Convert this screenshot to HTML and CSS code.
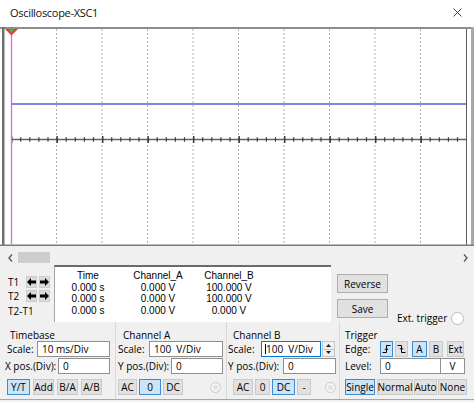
FILE: index.html
```html
<!DOCTYPE html>
<html lang="en">
<head>
  <meta charset="UTF-8">
  <title>Oscilloscope-XSC1</title>
  <link rel="stylesheet" href="styles.css">
</head>
<body>
  <div class="window">
    <div class="titlebar">
      <span class="title">Oscilloscope-XSC1</span>
      <svg class="close" width="9" height="9" viewBox="0 0 9 9"><path d="M0.5 0.5L8.5 8.5M8.5 0.5L0.5 8.5" stroke="#444" stroke-width="1"/></svg>
    </div>

    <!-- scope screen, 10 divisions across -->
    <svg class="screen" width="474" height="219" viewBox="0 0 474 219">
      <rect width="474" height="219" fill="#fff"/>
      <rect x="0" y="0" width="471" height="2" fill="#8e8e8e"/>
      <rect x="471" y="0" width="3" height="218" fill="#a8a8a8"/>
      <rect x="2" y="0" width="2.5" height="218" fill="#717171"/>
      <line x1="466.5" y1="2" x2="466.5" y2="218" stroke="#5c5c5c"/>
      <g stroke="#b3b3b3" stroke-dasharray="2 2">
        <line x1="56.5" y1="2" x2="56.5" y2="218"/>
        <line x1="102" y1="2" x2="102" y2="218"/>
        <line x1="147.5" y1="2" x2="147.5" y2="218"/>
        <line x1="193" y1="2" x2="193" y2="218"/>
        <line x1="238.5" y1="2" x2="238.5" y2="218"/>
        <line x1="284" y1="2" x2="284" y2="218"/>
        <line x1="329.5" y1="2" x2="329.5" y2="218"/>
        <line x1="375" y1="2" x2="375" y2="218"/>
        <line x1="420.5" y1="2" x2="420.5" y2="218"/>
      </g>
      <line x1="11" y1="112.5" x2="466" y2="112.5" stroke="#626262" stroke-width="1.6"/>
      <line x1="11" y1="112.5" x2="466" y2="112.5" stroke="#3c3c3c" stroke-width="4.5" stroke-dasharray="1.2 7.9"/>
      <line x1="11" y1="112.5" x2="466" y2="112.5" stroke="#3c3c3c" stroke-width="7" stroke-dasharray="1.4 44.1"/>
      <line x1="11" y1="77" x2="466" y2="77" stroke="#5a5ad8" stroke-width="1.4"/>
      <line x1="11.5" y1="2" x2="11.5" y2="217" stroke="#e36be3" stroke-width="1.4"/>
      <polygon points="5,2 18,2 11.5,8.5" fill="#e03a2f"/>
      <polygon points="8.5,2.5 14.5,2.5 11.5,6" fill="#3fbf3f"/>
      <rect x="0" y="217.5" width="474" height="1.5" fill="#7a7a7a"/>
    </svg>

    <div class="hscroll">
      <svg width="5" height="8" viewBox="0 0 5 8"><path d="M4 0.5L1 4L4 7.5" fill="none" stroke="#555" stroke-width="1.3"/></svg>
      <div class="thumb"></div>
      <svg class="next" width="5" height="8" viewBox="0 0 5 8"><path d="M1 0.5L4 4L1 7.5" fill="none" stroke="#555" stroke-width="1.3"/></svg>
    </div>

    <div class="readout">
      <div class="cursors">
        <div class="cur-row">
          <span class="cur-label">T1</span>
          <span class="arrow-btn"><svg width="9" height="8" viewBox="0 0 9 8"><path d="M0 4L4 0V2.5H9V5.5H4V8Z"/></svg></span>
          <span class="arrow-btn"><svg width="9" height="8" viewBox="0 0 9 8"><path d="M9 4L5 0V2.5H0V5.5H5V8Z"/></svg></span>
        </div>
        <div class="cur-row">
          <span class="cur-label">T2</span>
          <span class="arrow-btn"><svg width="9" height="8" viewBox="0 0 9 8"><path d="M0 4L4 0V2.5H9V5.5H4V8Z"/></svg></span>
          <span class="arrow-btn"><svg width="9" height="8" viewBox="0 0 9 8"><path d="M9 4L5 0V2.5H0V5.5H5V8Z"/></svg></span>
        </div>
        <div class="cur-row diff">
          <span class="cur-label">T2-T1</span>
        </div>
      </div>

      <div class="values">
        <span>Time</span><span>Channel_A</span><span>Channel_B</span>
        <span>0.000 s</span><span>0.000 V</span><span>100.000 V</span>
        <span>0.000 s</span><span>0.000 V</span><span>100.000 V</span>
        <span>0.000 s</span><span>0.000 V</span><span>0.000 V</span>
      </div>

      <div class="actions">
        <div class="action-col">
          <button class="btn btn-wide">Reverse</button>
          <button class="btn btn-wide">Save</button>
        </div>
        <div class="ext">
          <span>Ext. trigger</span>
          <span class="radio"></span>
        </div>
      </div>
    </div>

    <div class="settings">
      <div class="group timebase">
        <div class="group-title">Timebase</div>
        <div class="row">
          <span>Scale:</span>
          <div class="field w73">10 ms/Div</div>
        </div>
        <div class="row">
          <span class="pull">X pos.(Div):</span>
          <div class="field w52">0</div>
        </div>
        <div class="row btn-row gap3">
          <button class="btn on w23">Y/T</button>
          <button class="btn w21">Add</button>
          <button class="btn w21">B/A</button>
          <button class="btn w21">A/B</button>
        </div>
      </div>

      <div class="group chan-a">
        <div class="group-title">Channel A</div>
        <div class="row">
          <span>Scale:</span>
          <div class="field w74">100&nbsp; V/Div</div>
        </div>
        <div class="row">
          <span>Y pos.(Div):</span>
          <div class="field w52">0</div>
        </div>
        <div class="row btn-row gap2">
          <button class="btn w19">AC</button>
          <button class="btn on w22">0</button>
          <button class="btn w20">DC</button>
          <span class="radio off"></span>
        </div>
      </div>

      <div class="group chan-b">
        <div class="group-title">Channel B</div>
        <div class="row">
          <span>Scale:</span>
          <div class="spin-field">
            <div class="field focus w60"><span class="caret"></span>100&nbsp; V/Div</div>
            <div class="spinner">
              <span><svg width="5" height="3" viewBox="0 0 5 3"><path d="M0 3L2.5 0L5 3Z"/></svg></span>
              <span><svg width="5" height="3" viewBox="0 0 5 3"><path d="M0 0L2.5 3L5 0Z"/></svg></span>
            </div>
          </div>
        </div>
        <div class="row">
          <span>Y pos.(Div):</span>
          <div class="field w53">0</div>
        </div>
        <div class="row btn-row gap2">
          <button class="btn w20">AC</button>
          <button class="btn w15">0</button>
          <button class="btn on w23">DC</button>
          <button class="btn w14">-</button>
          <span class="radio off"></span>
        </div>
      </div>

      <div class="group trigger">
        <div class="group-title">Trigger</div>
        <div class="row">
          <span class="trig-label">Edge:</span>
          <button class="btn on w13"><svg width="9" height="10" viewBox="0 0 9 10"><path d="M0.5 8.5H4.5V1.5H8.5M2.8 6L4.5 4.2L6.2 6" fill="none" stroke="#000" stroke-width="1"/></svg></button>
          <button class="btn w13 ml2"><svg width="9" height="10" viewBox="0 0 9 10"><path d="M0.5 1.5H4.5V8.5H8.5M2.8 4L4.5 5.8L6.2 4" fill="none" stroke="#000" stroke-width="1"/></svg></button>
          <button class="btn on w15 ml4">A</button>
          <button class="btn w14 ml2">B</button>
          <button class="btn w17 ml4">Ext</button>
        </div>
        <div class="row">
          <span class="trig-label">Level:</span>
          <div class="field w61">0</div>
          <div class="field unit">V</div>
        </div>
        <div class="row btn-row">
          <button class="btn on w30">Single</button>
          <button class="btn w36 ml2">Normal</button>
          <button class="btn w23 ml1">Auto</button>
          <button class="btn w29 ml1">None</button>
        </div>
      </div>
    </div>
  </div>
</body>
</html>
```

FILE: styles.css
```css
* {
  box-sizing: border-box;
}

body {
  margin: 0;
  background: #f0f0f0;
  font-family: "Open Sans", "Noto Sans", sans-serif;
  font-size: 10px;
  line-height: 12px;
  color: #000;
}

.window {
  width: 474px;
  height: 402px;
  overflow: hidden;
  background: #f0f0f0;
}

.titlebar {
  height: 27px;
  background: #fff;
  display: flex;
  align-items: center;
  padding: 0 12px 2px 10px;
}

.title {
  font-size: 11px;
  letter-spacing: -0.3px;
  color: #111;
}

.close {
  margin-left: auto;
}

.screen {
  display: block;
}

/* scrollbar under the screen */
.hscroll {
  height: 19px;
  display: flex;
  align-items: center;
  padding: 4px 6px 0 8px;
}

.hscroll svg {
  display: block;
}

.thumb {
  width: 32px;
  height: 11px;
  margin-left: 5px;
  background: #cdcdcd;
}

.hscroll .next {
  margin-left: auto;
}

/* cursor readout */
.readout {
  display: flex;
  height: 57px;
}

.cursors {
  width: 54px;
  padding: 10px 0 0 8px;
}

.cur-row {
  display: flex;
  align-items: center;
  height: 13px;
}

.cur-row + .cur-row {
  margin-top: 1px;
}

.cur-row.diff {
  height: 16px;
  margin-top: 1px;
}

.cur-label {
  width: 18px;
  white-space: nowrap;
}

.arrow-btn {
  width: 11px;
  height: 12px;
  display: flex;
  align-items: center;
  justify-content: center;
  background: #dadada;
  border: 1px solid #cdcdcd;
}

.arrow-btn + .arrow-btn {
  margin-left: 2px;
}

.values {
  width: 277px;
  background: #fff;
  border-top: 2px solid #6b6b6b;
  border-left: 1px solid #a3a3a3;
  padding-top: 3px;
  display: grid;
  grid-template-columns: 66px 74px 68px;
  grid-auto-rows: 11.7px;
  align-content: start;
  font-family: "Liberation Sans", Arial, sans-serif;
  font-size: 10px;
  line-height: 11.7px;
  text-align: center;
  white-space: nowrap;
}

.actions {
  display: flex;
  padding: 9px 0 0 6px;
}

.action-col {
  display: flex;
  flex-direction: column;
  gap: 6px;
}

.ext {
  display: flex;
  align-items: center;
  height: 14px;
  margin: 37px 0 0 9px;
  white-space: nowrap;
}

.radio {
  width: 13px;
  height: 13px;
  margin-left: 4px;
  border-radius: 50%;
  border: 1px solid #bdbdbd;
  background: #fff;
}

.radio.off {
  width: 11px;
  height: 11px;
  border-color: #cccccc;
  background: radial-gradient(circle, #e2e2e2 0 2px, #f4f4f4 3px);
}

/* buttons */
.btn {
  height: 16px;
  padding: 0;
  display: flex;
  align-items: center;
  justify-content: center;
  font-family: inherit;
  font-size: 10px;
  line-height: 12px;
  color: #000;
  background: #e1e1e1;
  border: 1px solid #c9c9c9;
  border-radius: 0;
}

.btn.on {
  background: #cce4f7;
  border-color: #3c8ad0;
}

.btn-wide {
  width: 51px;
  height: 19px;
  border-color: #adadad;
}

.w13 { width: 13px; }
.w14 { width: 14px; }
.w15 { width: 15px; }
.w17 { width: 17px; }
.w19 { width: 19px; }
.w20 { width: 20px; }
.w21 { width: 21px; }
.w22 { width: 22px; }
.w23 { width: 23px; }
.w29 { width: 29px; }
.w30 { width: 30px; }
.w36 { width: 36px; }

.ml1 { margin-left: 1px; }
.ml2 { margin-left: 2px; }
.ml4 { margin-left: 4px; }

/* settings groups */
.settings {
  display: flex;
  height: 78px;
  padding-left: 3px;
  border-bottom: 1px solid #a6a6a6;
}

.group {
  padding-top: 7px;
  white-space: nowrap;
}

.group + .group {
  border-left: 1px solid #d9d9d9;
}

.timebase {
  width: 112px;
  padding-left: 4px;
  padding-right: 5px;
}

.chan-a {
  width: 111px;
  padding-left: 2px;
  padding-right: 3px;
}

.chan-b {
  width: 113px;
  padding-left: 1px;
  padding-right: 3px;
}

.trigger {
  flex: 1;
  padding-left: 5px;
}

.group-title {
  height: 12px;
  line-height: 12px;
  margin-left: 5px;
}

.timebase .group-title {
  margin-left: 3px;
}

.trigger .group-title {
  margin-left: 0;
}

.row {
  display: flex;
  align-items: center;
  height: 16px;
  margin-top: 1px;
}

.group-title + .row {
  margin-top: 0;
}

.btn-row {
  margin-top: 5px;
}

.gap2 { gap: 2px; }
.gap3 { gap: 3px; }

.chan-b .btn-row {
  padding-left: 5px;
}

.chan-a .radio.off {
  margin-left: 25px;
}

.chan-b .radio.off {
  margin-left: 12px;
}

.pull {
  margin-left: -2px;
}

.field {
  height: 16px;
  margin-left: auto;
  padding: 0 4px;
  line-height: 14px;
  white-space: nowrap;
  background: #fff;
  border: 1px solid #8f8f8f;
}

.field.focus {
  border-color: #0078d7;
  padding-left: 3px;
}

.caret {
  display: inline-block;
  width: 1px;
  height: 10px;
  vertical-align: -1px;
  background: #000;
}

.w52 { width: 52px; }
.w53 { width: 53px; }
.w60 { width: 60px; }
.w61 { width: 61px; }
.w73 { width: 73px; }
.w74 { width: 74px; }

.spin-field {
  display: flex;
  margin-left: auto;
  margin-right: 1px;
}

.spinner {
  width: 13px;
  height: 16px;
  margin-left: 1px;
  display: flex;
  flex-direction: column;
  border: 1px solid #c4c4c4;
  background: #f0f0f0;
}

.spinner span {
  flex: 1;
  display: flex;
  align-items: center;
  justify-content: center;
}

.spinner span + span {
  border-top: 1px solid #c4c4c4;
}

.spinner svg {
  display: block;
  fill: #222;
}

.trig-label {
  width: 35px;
}

.trigger .row .field {
  margin-left: 0;
}

.field.unit {
  width: 24px;
  text-align: center;
  border-left: none;
}
```
